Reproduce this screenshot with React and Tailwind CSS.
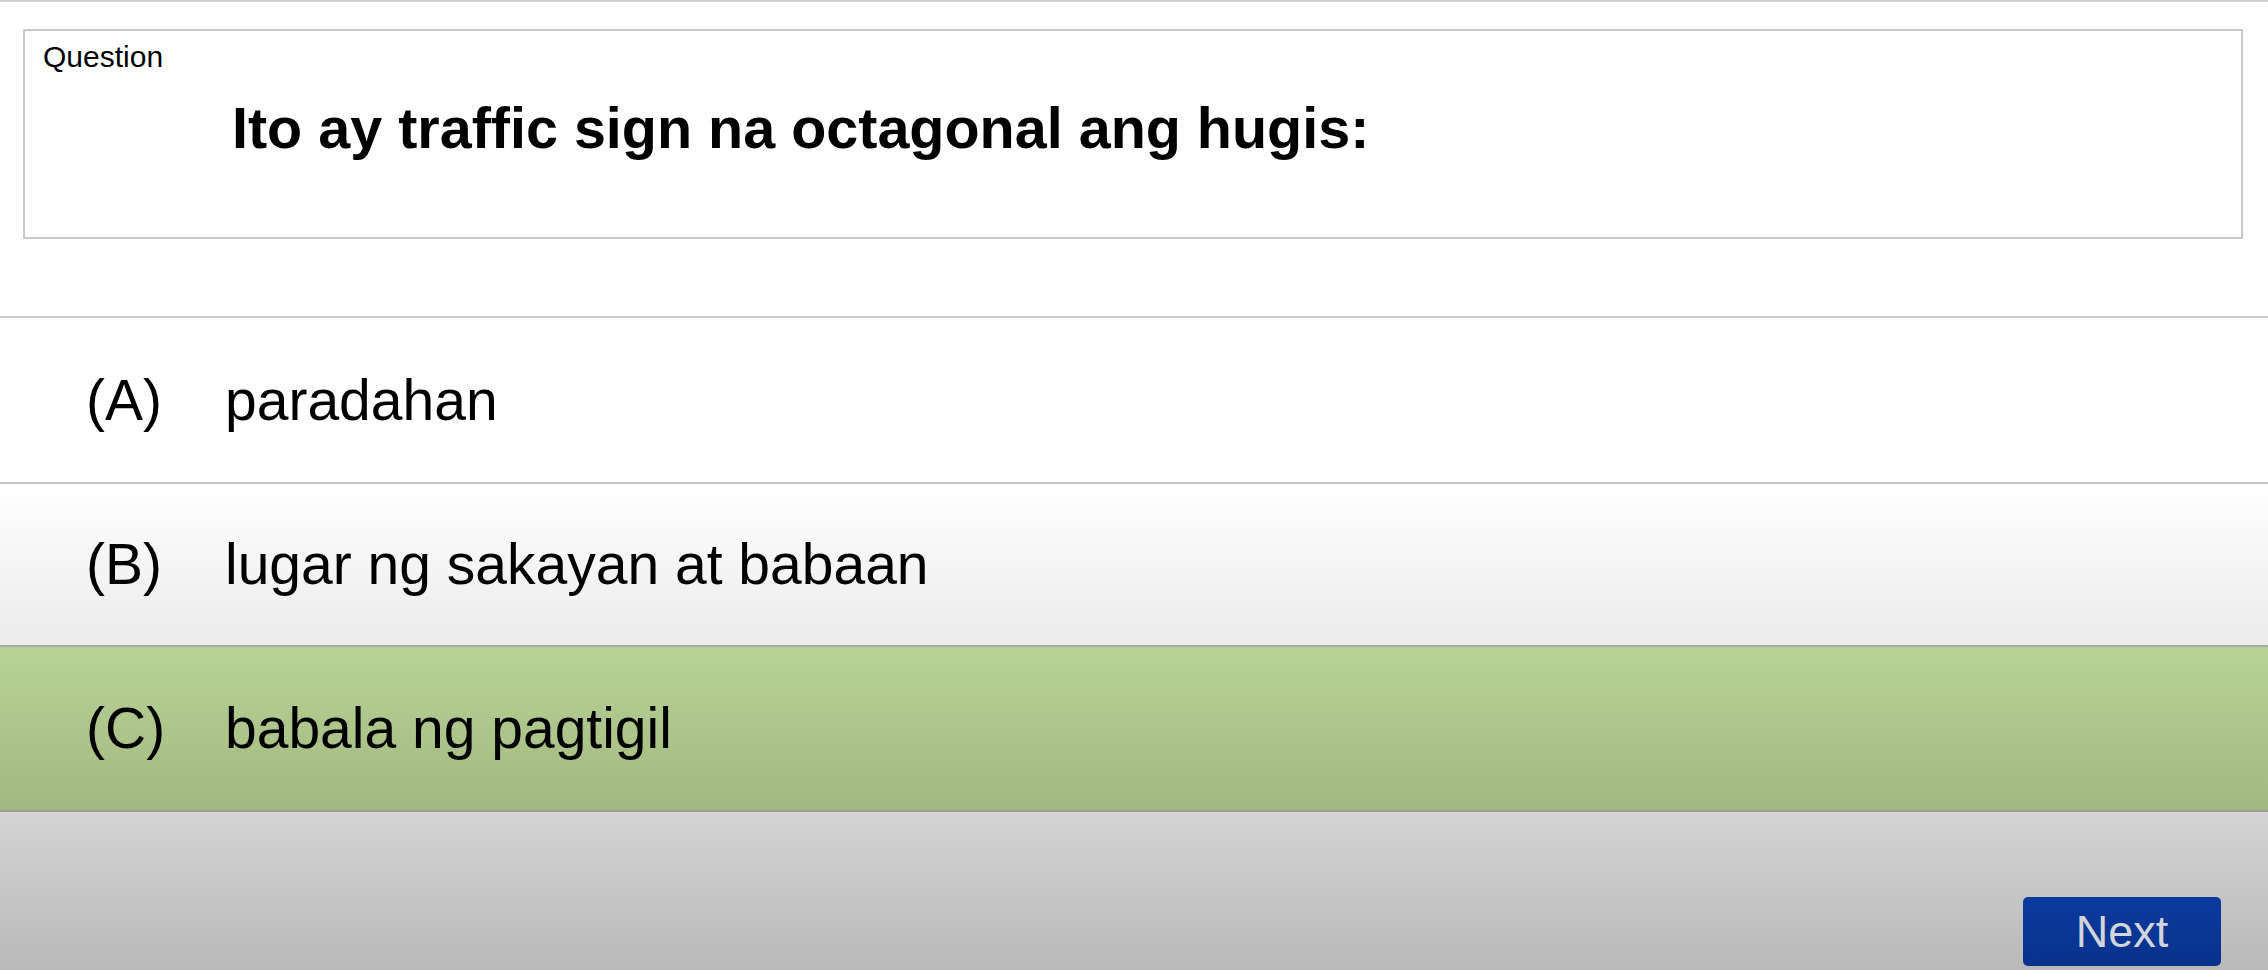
import React from 'react';

const options = [
  { key: 'A', text: 'paradahan', row: 'bg-white h-[164px]' },
  { key: 'B', text: 'lugar ng sakayan at babaan', row: 'bg-gradient-to-b from-[#ffffff] to-[#ebebeb] h-[161px]' },
  { key: 'C', text: 'babala ng pagtigil', row: 'bg-gradient-to-b from-[#b9d396] to-[#a2b87f] h-[163px]' },
];

const lines = ['bg-[#cdcdcd]', 'bg-[#c4c4c4]', 'bg-[#a9a9a9]', 'bg-[#9d9d9d]'];

export default function App() {
  return (
    <div className="w-[2268px] h-[970px] flex flex-col overflow-hidden bg-white text-black font-['Liberation_Sans',Arial,sans-serif]">
      <div className="h-[2px] bg-[#d2d2d2]" />

      {/* Question */}
      <div className="h-[314px] pt-[27px] pl-[23px] pr-[25px]">
        <div className="h-[210px] border-2 border-[#c9c9c9] pt-[11px] pl-[18px]">
          <div className="text-[30px] leading-none">Question</div>
          <div className="mt-[28px] pl-[189px] text-[57.5px] font-bold leading-none">
            Ito ay traffic sign na octagonal ang hugis:
          </div>
        </div>
      </div>

      {/* Options */}
      <div className={`h-[2px] ${lines[0]}`} />
      {options.map((o, i) => (
        <React.Fragment key={o.key}>
          <div className={`flex items-center pl-[86px] ${o.row}`}>
            <span className="w-[139px] text-[57px] leading-none">({o.key})</span>
            <span className="text-[57px] leading-none">{o.text}</span>
          </div>
          <div className={`h-[2px] ${lines[i + 1]}`} />
        </React.Fragment>
      ))}

      {/* Footer */}
      <div className="flex-1 flex justify-end items-end pr-[47px] pb-[4px] bg-gradient-to-b from-[#d4d4d4] to-[#b9b9b9]">
        <button className="w-[198px] h-[69px] rounded-[5px] bg-gradient-to-b from-[#0b3a9e] to-[#09328c] text-[#d2d5dc] text-[45px] leading-none">
          Next
        </button>
      </div>
    </div>
  );
}
